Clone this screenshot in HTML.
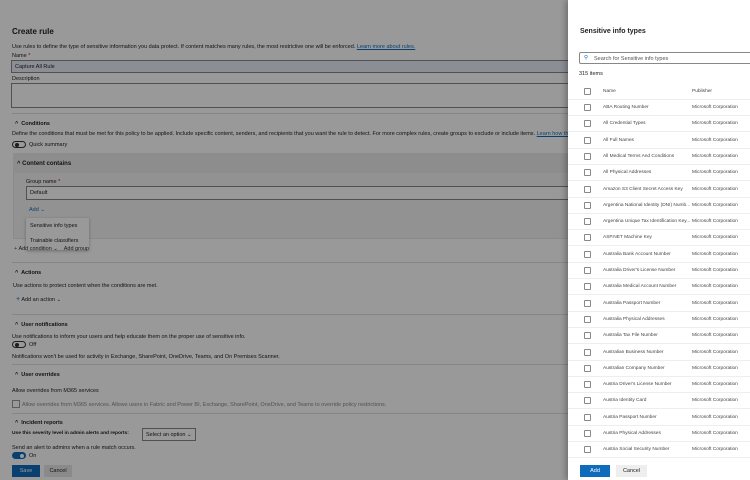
<!DOCTYPE html>
<html><head><style>
*{box-sizing:border-box;margin:0;padding:0}
body{width:750px;height:480px;overflow:hidden;font-family:"Liberation Sans",sans-serif;color:#222;background:#fff;position:relative;font-size:5.5px}
.a{position:absolute;white-space:nowrap}
.b{font-weight:bold}
.lnk{color:#0f6cbd;text-decoration:underline}
.ov{position:absolute;left:0;top:0;width:568px;height:480px;background:rgba(0,0,0,0.4)}
.inp{position:absolute;border:1px solid #888;background:#fff}
.tg{position:absolute;width:14px;height:7px;border:1px solid #333;border-radius:4px}
.tg i{position:absolute;width:4px;height:4px;border-radius:50%;background:#333;top:0.5px;left:2px}
.hr{position:absolute;left:12px;width:556px;height:1px;background:#e0e0e0}
.p{position:absolute;left:568px;top:0;width:182px;height:480px;background:#fff;box-shadow:-2px 0 6px rgba(0,0,0,.3)}
.row{position:absolute;left:0;width:182px;height:16px;border-bottom:1px solid #eee;color:#444;font-size:4.8px}
.cb{position:absolute;left:16px;top:4px;width:7px;height:7px;border:1px solid #888;border-radius:1px}
.row .n{position:absolute;left:35px;top:5px}
.row .pb{position:absolute;left:124px;top:5px}
</style></head><body>
<div class="a b" style="left:12px;top:27px;font-size:8px">Create rule</div>
<div class="a" style="left:12px;top:44px">Use rules to define the type of sensitive information you data protect. If content matches many rules, the most restrictive one will be enforced. <span class="lnk">Learn more about rules.</span></div>
<div class="a" style="left:12px;top:53px">Name <span style="color:#c00">*</span></div>
<div class="inp" style="left:11px;top:60px;width:560px;height:13px;background:#e8eef8"></div>
<div class="a" style="left:15px;top:64px">Capture All Rule</div>
<div class="a" style="left:12px;top:76px">Description</div>
<div class="inp" style="left:11px;top:83px;width:560px;height:25px"></div>
<div class="hr" style="top:113px"></div>
<div class="a b" style="left:15px;top:121px">^&nbsp; Conditions</div>
<div class="a" style="left:12px;top:131px">Define the conditions that must be met for this policy to be applied. Include specific content, senders, and recipients that you want the rule to detect. For more complex rules, create groups to exclude or include items. <span class="lnk">Learn how the cond</span></div>
<div class="tg" style="left:12px;top:141px"><i></i></div>
<div class="a" style="left:29px;top:142px">Quick summary</div>
<div class="a" style="left:13px;top:153px;width:560px;height:86px;background:#f3f3f3;border:1px solid #e6e6e6"></div>
<div class="a" style="left:13px;top:153px;width:560px;height:20px;background:#ececec"></div>
<div class="a b" style="left:17px;top:161px;font-size:6px">^ Content contains</div>
<div class="a" style="left:26px;top:179px">Group name <span style="color:#c00">*</span></div>
<div class="inp" style="left:26px;top:186px;width:546px;height:14px"></div>
<div class="a" style="left:30px;top:190px">Default</div>
<div class="a" style="left:29px;top:207px;color:#0f6cbd">Add &#8964;</div>
<div class="a" style="left:26px;top:218px;width:63px;height:32px;background:#fff;box-shadow:0 1px 3px rgba(0,0,0,.3)"></div>
<div class="a" style="left:30px;top:223px">Sensitive info types</div>
<div class="a" style="left:30px;top:238px">Trainable classifiers</div>
<div class="a" style="left:14px;top:246px;color:#0f6cbd">+ <span style="color:#333">Add condition &#8964;&nbsp;&nbsp;&nbsp; Add group</span></div>
<div class="hr" style="top:262px"></div>
<div class="a b" style="left:15px;top:270px">^&nbsp; Actions</div>
<div class="a" style="left:13px;top:283px">Use actions to protect content when the conditions are met.</div>
<div class="a" style="left:16px;top:296px"><span style="color:#0f6cbd;font-size:7px">+</span> Add an action &#8964;</div>
<div class="hr" style="top:314px"></div>
<div class="a b" style="left:15px;top:322px">^&nbsp; User notifications</div>
<div class="a" style="left:12px;top:334px">Use notifications to inform your users and help educate them on the proper use of sensitive info.</div>
<div class="tg" style="left:12px;top:341px"><i></i></div>
<div class="a" style="left:29px;top:342px">Off</div>
<div class="a" style="left:12px;top:354px">Notifications won't be used for activity in Exchange, SharePoint, OneDrive, Teams, and On Premises Scanner.</div>
<div class="hr" style="top:364px"></div>
<div class="a b" style="left:15px;top:372px">^&nbsp; User overrides</div>
<div class="a" style="left:12px;top:388px">Allow overrides from M365 services</div>
<div class="a" style="left:12px;top:400px;width:8px;height:8px;border:1px solid #999"></div>
<div class="a" style="left:22px;top:402px;color:#888">Allow overrides from M365 services. Allows users in Fabric and Power BI, Exchange, SharePoint, OneDrive, and Teams to override policy restrictions.</div>
<div class="hr" style="top:413px"></div>
<div class="a b" style="left:15px;top:420px">^&nbsp; Incident reports</div>
<div class="a b" style="left:12px;top:431px;font-size:4.9px">Use this severity level in admin alerts and reports:</div>
<div class="inp" style="left:142px;top:428px;width:54px;height:13px"></div>
<div class="a" style="left:146px;top:432px">Select an option &#8964;</div>
<div class="a" style="left:12px;top:445px">Send an alert to admins when a rule match occurs.</div>
<div class="tg" style="left:12px;top:452px;background:#0f6cbd;border-color:#0f6cbd"><i style="background:#fff;left:7px"></i></div>
<div class="a" style="left:29px;top:453px">On</div>
<div class="a" style="left:12px;top:465px;width:28px;height:12px;background:#0f6cbd;color:#fff;text-align:center;line-height:12px">Save</div>
<div class="a" style="left:44px;top:465px;width:28px;height:12px;background:#e6e6e6;text-align:center;line-height:12px">Cancel</div>
<div class="ov"></div>
<div class="p">
<div class="a b" style="left:12px;top:28px;font-size:7px">Sensitive info types</div>
<div class="a" style="left:11px;top:52px;width:175px;height:12px;border:1px solid #888;border-radius:2px"></div>
<div class="a" style="left:16px;top:55px;color:#0f6cbd">&#9906;</div>
<div class="a" style="left:26px;top:56px;color:#555">Search for Sensitive info types</div>
<div class="a" style="left:11px;top:71px">315 items</div>
<div id="rows"></div>
<div class="a" style="left:12px;top:465px;width:30px;height:12px;background:#0f6cbd;color:#fff;text-align:center;line-height:12px">Add</div>
<div class="a" style="left:48px;top:465px;width:31px;height:12px;background:#eee;text-align:center;line-height:12px">Cancel</div>
</div>
<script>
var n=["ABA Routing Number","All Credential Types","All Full Names","All Medical Terms And Conditions","All Physical Addresses","Amazon S3 Client Secret Access Key","Argentina National Identity (DNI) Numb...","Argentina Unique Tax Identification Key...","ASP.NET Machine Key","Australia Bank Account Number","Australia Driver's License Number","Australia Medical Account Number","Australia Passport Number","Australia Physical Addresses","Australia Tax File Number","Australian Business Number","Australian Company Number","Austria Driver's License Number","Austria Identity Card","Austria Passport Number","Austria Physical Addresses","Austria Social Security Number"];
var h='<div class="row" style="top:84px"><div class="cb"></div><div class="n">Name</div><div class="pb">Publisher</div></div>';
for(var i=0;i<n.length;i++){h+='<div class="row" style="top:'+(100+i*16.3)+'px"><div class="cb"></div><div class="n">'+n[i]+'</div><div class="pb">Microsoft Corporation</div></div>';}
document.getElementById('rows').innerHTML=h;
</script>
</body></html>
